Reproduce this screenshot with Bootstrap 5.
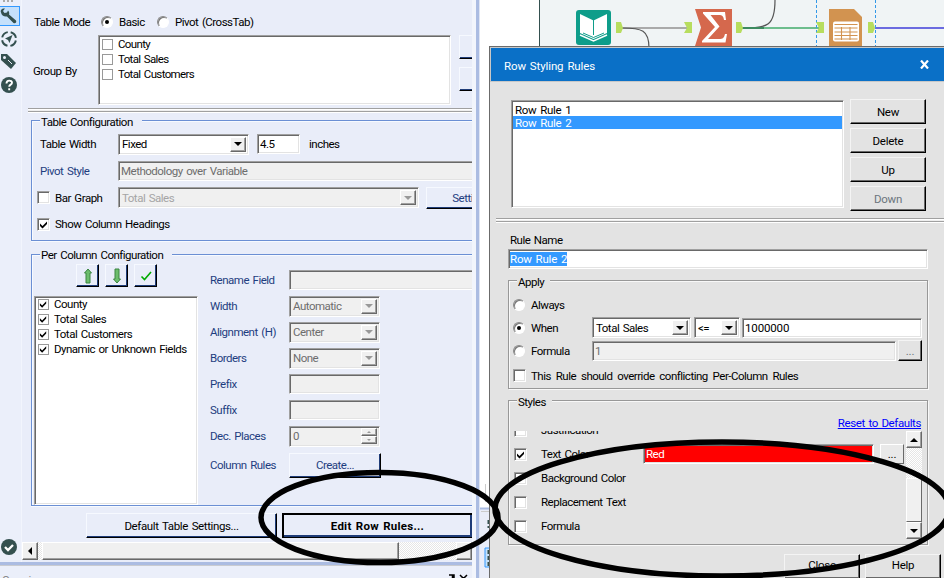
<!DOCTYPE html>
<html lang="en">
<head>
<meta charset="utf-8">
<title>Row Styling Rules</title>
<link href="https://cdn.jsdelivr.net/npm/bootstrap@5.3.0/dist/css/bootstrap.min.css" rel="stylesheet">
<style>
body{margin:0;overflow:hidden;background:#fff}
.desk{width:944px;height:578px;font:11.5px/14px Roboto,"Liberation Sans",sans-serif;letter-spacing:-.5px;word-spacing:1.2px;color:#000;white-space:nowrap}
.desk svg{display:block;flex:none}
.side{width:22px;background:#ebeffa;border-right:1px solid #f2f5fd;height:562px}
.tool{width:20px;height:20px}
.tool-on{border:1px solid #3399ff;background:#c5e0fb;border-left:0}
.pane{width:450px;background:#e9edf9;height:562px;overflow:hidden}
.split{width:8px;flex:none;height:578px;background:linear-gradient(90deg,#f2f5fc 0 4px,#abbce2 4px 7px,#dfe5f3 7px)}
.sunk{background:#fff;border:1px solid;border-color:#a0a0a0 #fff #fff #a0a0a0;box-shadow:inset 1px 1px #696969,inset -1px -1px #e3e3e3;flex:none}
.gray{background:#f0f0f0;color:#6d6d6d}
.push{border:1px solid;border-color:#f6f9ff #000 #000 #f6f9ff;box-shadow:inset -1px -1px #1f3c78;height:25px;flex:none;display:flex;align-items:center;justify-content:center}
.dlg .push{border-color:#f4f4f4 #000 #000 #f4f4f4;box-shadow:inset -1px -1px #696969;height:25px;width:76px;letter-spacing:-.25px}
.dis{color:#1e3d80}
.rule{height:5px;border-top:1px solid #a0a0a0;border-bottom:1px solid #fff;background:linear-gradient(#fff 0 1px,#eee 1px 2px,#a0a0a0 2px)}
.grp{border:1px solid #6b8fd4;border-right:0;box-shadow:inset 1px 1px #f7faff,0 1px #f7faff;margin-left:9px}
.grp-title{display:block;width:max-content;background:#e9edf9;padding:2px 9px 0 1px;margin:-8px 0 0 8px;height:15px}
.dlg .grp{border:1px solid #989898;box-shadow:inset 1px 1px #f8f8f8,1px 1px #f8f8f8;margin:0}
.dlg .grp-title{background:#e3e3e3;padding-right:6px}
.drop{display:flex;align-items:center;justify-content:space-between;height:21px;padding:2px 2px 2px 3px}
.arr{width:16px;height:100%;background:#f0f0f0;border:1px solid;border-color:#fff #696969 #696969 #fff;box-shadow:inset -1px -1px #a0a0a0;display:flex;align-items:center;justify-content:center;flex:none}
.arr::after{content:"";border:4px solid transparent;border-top-color:#000;border-bottom:0}
.gray .arr::after{border-top-color:#999}
.arr.up::after{border:4px solid transparent;border-bottom-color:#000;border-top:0}
.arr.lf::after{border:4px solid transparent;border-right-color:#000;border-left:0}
.arr.rt::after{border:0}
.chk{width:13px;height:13px}
.flat{width:11px;height:11px;border:1px solid #999;background:#fff;flex:none}
.rad{width:12px;height:12px;border-radius:50%;border:1px solid;border-color:#888 #fff #fff #888;background:#fff;box-shadow:inset 1px 1px #777;flex:none;display:flex;align-items:center;justify-content:center}
.rad.on::after{content:"";width:4px;height:4px;border-radius:50%;background:#000}
.fld{height:20px;padding:2px 2px}
.track{background:repeating-conic-gradient(#fff 0 25%,#e6e6e6 0 50%) 0 0/2px 2px}
.canvas{width:464px;height:578px;background:#fff}
.dlg{left:489px;top:46px;width:460px;height:540px;background:#e3e3e3;border:1px solid #6b6b6b;border-right:0}
.bar{height:35px;background:#0a70c7;border:1px solid #c8c8c8;border-right:0;color:#fff}
.it{height:15px;line-height:15px}
.sel{background:#3399ff;color:#fff}
/* table mode and grouping */
.t1{height:27px;padding:17px 0 0 12px}
.lab2{width:67px}.r1{margin-right:6px}.r2{width:38px}.r3{margin-right:6px}
.grpby{height:70px;margin:8px 0 0 11px}
.gl{width:65px;flex:none;padding-top:2px}
.list1{width:353px;height:70px;padding:1px 3px 0}
.list1 .it{letter-spacing:-.65px}
.gbtn{margin-left:8px;width:30px}.gbtn .push{height:24px;width:30px;margin-bottom:8px}
.rl1{margin:3px 0 0 6px}
/* table configuration */
.g1{margin-top:7px;height:121px}
.g1rows{padding:3px 0 0 8px}
.c1{height:26.7px}
.lab{width:78px;flex:none}
.wfix{width:131px}.inch{width:43px;margin-left:8px}.inl{margin-left:9px}
.pv{width:400px}.cb{margin-left:-3px}.lab.cb{width:81px}.cbt{margin-left:5px}
.wbar{width:301px}.faint{color:#a5a5a5}.setb{width:98px;height:22px;margin-left:7px}
/* per column configuration */
.g2{margin-top:13px;height:252px}
.g2 .grp-title{padding-top:1px}
.lcol{width:176px;padding-left:2px;flex:none}.tri{gap:6px;padding-left:42px;margin-top:2px}.tri .push{width:23px;height:23px}
.list2{width:164px;height:209px;margin-top:9px;padding:0 3px}.ck{margin-left:5px}
.rcol{padding-left:2px;padding-top:5px}.rcol .lab{width:79px}
.colrow{height:26px}
.w91{width:91px}.crow{height:32px}.w92{width:92px}
.spin{width:16px;height:17px}.spin .arr{height:8px}.spin .arr::after{border-width:2px}
.spin .arr.up::after{border-width:2px;border-top:0;border-bottom-color:#999}
.botb{margin:7px 0 0 64px;gap:5px}.defb{width:191px}.editb{width:191px;border:1px solid #000;box-shadow:inset 1px 1px #000,inset -2px -2px #1f3c78;font-weight:700;letter-spacing:.25px}
.defb{letter-spacing:-.38px}
.hsb{height:18px;margin-top:4px}.thumb{width:357px;margin-left:4px;background:#f0f0f0;border:1px solid;border-color:#fff #696969 #696969 #fff;box-shadow:inset -1px -1px #a0a0a0}
.below{height:16px;width:472px;border-top:3px solid #abbce2;background:#ebeffa;box-shadow:inset 0 1px #c9cbd0;color:#888;padding:8px 2px 0 2px;overflow:hidden}
/* dialog */
.ttl{margin:3px 0 0 13px;letter-spacing:-.12px}.xx{margin-right:20px}
.dtop{padding:18px 0 0 21px}.dlist{width:333px;height:108px;padding:2px 1px}.ri{height:13px;line-height:15px;padding-left:2px;letter-spacing:-.28px}
.dbt{gap:4px;margin:-1px 0 0 6px}
.rl2{margin:7px 4px 0 6px}
.rn{margin:10px 0 0 20px}.rni{margin:2px 0 0 18px;width:420px;padding:2px 1px;letter-spacing:-.2px}
.dlg .ga{margin:11px 0 0 18px;width:420px;height:109px}
.ar{height:23px;padding-left:4px}.ga .ar:nth-child(2){margin-top:5px}
.al{margin-left:6px;width:61px;flex:none}
.d1{width:99px}.d2{width:46px;margin-left:3px}.d3{width:180px;margin-left:2px;letter-spacing:-.15px}
.d4{width:304px}.dlg .dots{width:24px;height:21px;margin-left:2px}
.last{height:27px}.wide{margin-left:5px;word-spacing:2.5px}
.dlg .gs{margin:11px 0 0 18px;width:420px;height:145px}
.reset{padding:8px 6px 0;height:23px;letter-spacing:-.4px}.reset a{color:#00f}
.clip{height:113px;overflow:hidden}
.sl{padding-left:5px;margin-top:-13px}.stx{margin-left:14px;width:102px;flex:none}
.srow{height:24px;flex:none}.red{width:231px;background:#f00;color:#fff}.dlg .dots2{width:24px;height:20px;margin-left:6px;border-color:#fff #696969 #696969 #fff;background:#e9e9e9;box-shadow:none}
.vsb{width:16px;margin-right:5px;height:108px;flex:none}.vsb .arr{height:17px}.vth{height:44px;margin-top:auto;background:#f0f0f0;border:1px solid;border-color:#fff #696969 #696969 #fff}
.dft{margin:9px 0 0 294px;gap:5px}.dlg .dft .push{padding-bottom:3px}
</style>
</head>
<body>
<svg width="0" height="0" class="position-absolute"><defs>
<path id="tick" d="M2 4.500L4.500 7 9 2.500V5L4.500 9.500 2 7z" fill="#000"/></defs></svg>
<div class="desk position-relative overflow-hidden">
<div class="d-flex">
 <div class="flex-shrink-0">
 <div class="d-flex">
  <div class="side d-flex flex-column">
   <svg width="21" height="6"><path d="M3 1h2M7 1h2M11 1h2" stroke="#aaa" stroke-width="2"/></svg>
   <div class="tool tool-on"><svg width="19" height="18" viewBox="0 0 19 18"><path d="M1 5.500C0 3 2 1 5 1.500L3 4l1.500 2L7 5.500 8 3.500c2 2 1 4 1 4l7 6c1 2-1 3.500-2.500 2.500L7 9.500C4 10 1.500 8.500 1 5.500z" fill="#34504f"/></svg></div>
   <svg class="mt-1" width="18" height="18" viewBox="0 0 18 18"><circle cx="9" cy="9" r="7" fill="none" stroke="#34504f" stroke-width="2" stroke-dasharray="8 3" stroke-dashoffset="-1.500"/><path d="M12.500 5L9.500 13 8 10 5 8.500z" fill="#34504f"/></svg>
   <svg class="mt-1" width="18" height="18" viewBox="0 0 18 18"><path d="M1 4V2h6l9 9-5 6-10-9z" fill="#34504f"/><circle cx="4.500" cy="5.500" r="1.500" fill="#ebeffa"/><path d="M8 8l4 4" stroke="#ebeffa"/></svg>
   <svg class="mt-1" width="18" height="20" viewBox="0 0 18 20"><circle cx="9" cy="11" r="8" fill="#34504f"/><path d="M6.500 9.500c0-4 5.500-3.500 5.500-.8 0 2-2.800 1.800-2.800 4M9.200 14.200v2" fill="none" stroke="#fff" stroke-width="1.900"/></svg>
   <svg class="mt-auto mb-1" width="18" height="22" viewBox="0 0 18 22"><circle cx="9" cy="11" r="8" fill="#34504f"/><path d="M5 11l3 3 5-5" fill="none" stroke="#fff" stroke-width="2.300"/></svg>
  </div>
  <div class="pane">
   <div class="t1 d-flex align-items-center"><span class="lab2">Table Mode</span><span class="rad on r1"></span><span class="r2">Basic</span><span class="rad r3"></span><span>Pivot (CrossTab)</span></div>
   <div class="d-flex grpby"><span class="gl align-self-center">Group By</span>
    <div class="sunk list1">
     <div class="it d-flex align-items-center"><span class="flat"></span><span class="ck">County</span></div>
     <div class="it d-flex align-items-center"><span class="flat"></span><span class="ck">Total Sales</span></div>
     <div class="it d-flex align-items-center"><span class="flat"></span><span class="ck">Total Customers</span></div>
    </div>
    <div class="gbtn"><div class="push"></div><div class="push"></div></div>
   </div>
   <div class="rule rl1"></div>
   <div class="grp g1">
    <span class="grp-title">Table Configuration</span>
    <div class="g1rows">
     <div class="d-flex align-items-center c1"><span class="lab">Table Width</span><div class="sunk drop wfix"><span>Fixed</span><i class="arr"></i></div><div class="sunk fld inch">4.5</div><span class="inl">inches</span></div>
     <div class="d-flex align-items-center c1"><span class="lab dis">Pivot Style</span><div class="sunk gray fld pv">Methodology over Variable</div></div>
     <div class="d-flex align-items-center c1"><span class="lab d-flex align-items-center cb"><span class="sunk chk"></span><span class="cbt">Bar Graph</span></span><div class="sunk gray drop wbar"><span class="faint">Total Sales</span><i class="arr"></i></div><div class="push dis setb">Settings...</div></div>
     <div class="d-flex align-items-center c1"><span class="d-flex align-items-center cb"><span class="sunk chk"><svg width="11" height="11"><use href="#tick"/></svg></span><span class="cbt">Show Column Headings</span></span></div>
    </div>
   </div>
   <div class="grp g2">
    <span class="grp-title">Per Column Configuration</span>
    <div class="d-flex">
     <div class="lcol">
      <div class="d-flex tri">
       <div class="push"><svg width="12" height="18"><path d="M6 2l3.500 4H8v10H4V6H2.500z" fill="#6cbd6c" stroke="#3a8540"/></svg></div>
       <div class="push"><svg width="12" height="18"><path d="M6 16l3.500-4H8V2H4v10H2.500z" fill="#6cbd6c" stroke="#3a8540"/></svg></div>
       <div class="push"><svg width="12" height="14"><path d="M1.500 7.500l3 3L11 3" fill="none" stroke="#0a0" stroke-width="1.600"/></svg></div>
      </div>
      <div class="sunk list2">
       <div class="it d-flex align-items-center"><span class="flat"><svg width="9" height="9" viewBox="1 1 10 10"><use href="#tick"/></svg></span><span class="ck">County</span></div>
       <div class="it d-flex align-items-center"><span class="flat"><svg width="9" height="9" viewBox="1 1 10 10"><use href="#tick"/></svg></span><span class="ck">Total Sales</span></div>
       <div class="it d-flex align-items-center"><span class="flat"><svg width="9" height="9" viewBox="1 1 10 10"><use href="#tick"/></svg></span><span class="ck">Total Customers</span></div>
       <div class="it d-flex align-items-center"><span class="flat"><svg width="9" height="9" viewBox="1 1 10 10"><use href="#tick"/></svg></span><span class="ck">Dynamic or Unknown Fields</span></div>
      </div>
     </div>
     <div class="rcol dis">
      <div class="colrow d-flex align-items-center"><span class="lab">Rename Field</span><div class="sunk gray fld pv"></div></div>
      <div class="colrow d-flex align-items-center"><span class="lab">Width</span><div class="sunk gray drop w91"><span>Automatic</span><i class="arr"></i></div></div>
      <div class="colrow d-flex align-items-center"><span class="lab">Alignment (H)</span><div class="sunk gray drop w91"><span>Center</span><i class="arr"></i></div></div>
      <div class="colrow d-flex align-items-center"><span class="lab">Borders</span><div class="sunk gray drop w91"><span>None</span><i class="arr"></i></div></div>
      <div class="colrow d-flex align-items-center"><span class="lab">Prefix</span><div class="sunk gray fld w91"></div></div>
      <div class="colrow d-flex align-items-center"><span class="lab">Suffix</span><div class="sunk gray fld w91"></div></div>
      <div class="colrow d-flex align-items-center"><span class="lab">Dec. Places</span><div class="sunk gray drop w91"><span>0</span><span class="spin"><i class="arr up"></i><i class="arr"></i></span></div></div>
      <div class="colrow crow d-flex align-items-center"><span class="lab">Column Rules</span><div class="push w92">Create...</div></div>
     </div>
    </div>
   </div>
   <div class="d-flex botb"><div class="push defb">Default Table Settings...</div><div class="push editb">Edit Row Rules...</div></div>
   <div class="d-flex hsb track"><i class="arr lf"></i><div class="thumb"></div><i class="arr rt ms-auto"></i></div>
  </div>
 </div>
 <div class="below d-flex justify-content-between"><span>Overview</span><svg width="24" height="10"><path d="M3 2h5v5M6.500 2v5M14 2l7 7M21 2l-7 7" fill="none" stroke="#000" stroke-width="1.500"/></svg></div>
 </div>
 <div class="split"></div>
 <div class="canvas">
  <svg width="464" height="578" viewBox="480 0 464 578">
   <path d="M539 0h405v50H539z" fill="#f0f4f5"/><path d="M539.500 0v48" stroke="#34504f"/>
   <path d="M622 28h70" stroke="#aaa" stroke-width="2"/><path d="M622 28c20 0 27 2 27 20M742 28c26 0 33-2 33-28" fill="none" stroke="#555" stroke-width="1.200"/>
   <path d="M742 28h78" stroke="#6dbd8d" stroke-width="2"/><path d="M742 28h22" stroke="#3d8a5f" stroke-width="2"/><path d="M875 28h69" stroke="#6b6be0" stroke-width="2"/>
   <path d="M816.500 0v48M875.500 0v48" stroke="#3399e8" stroke-dasharray="3 2"/>
   <g fill="#b7dd5e"><path d="M616 22h5l2 6-2 5h-5zM736 22h5l2 6-2 5h-5zM868 22h5l2 6-2 5h-5zM684 22h8v11h-8l3-5zM816 22h8v11h-8l3-5z"/></g>
   <rect x="576" y="10" width="35" height="35" rx="3" fill="#0e9d8a"/><path d="M580 14l13.500 6.500L607 14v19l-13.500 6L580 33z" fill="#fff"/><path d="M593.500 20v15" stroke="#0e9d8a" stroke-width="1"/><path d="M583 33l10.500 4.500L604 33" fill="none" stroke="#0e9d8a" stroke-width="1"/><path d="M580 35l13.500 6L607 35" fill="none" stroke="#fff" stroke-width="1.500"/>
   <path d="M695 9h37v37h-37l6-18.500z" fill="#d5684d"/><path d="M703 12h22l1 8h-2c-.5-4-2-5-5-5h-8.500l9 11.500L708 39h11c4 0 5-1 6-5h2l-1.500 8.500H702V41l13-14-12-13.500z" fill="#fff"/>
   <path d="M829 9h25l8 8v29h-33z" fill="#d29350"/><rect x="833" y="21.500" width="26" height="20" rx="2" fill="#fff"/><path d="M834.500 24.500h23M834.500 28h23M834.500 32h23M834.500 35.500h23M834.500 39h23M841.500 27v13M850 27v13" stroke="#d29350" stroke-width="1.100"/>
   <path d="M480 508h10v70h-10z" fill="#e9edf9"/><path d="M480 508.500h10" stroke="#abbce2" stroke-width="2"/><path d="M485.500 484v18M481 511.500h9M481 536.500h9" stroke="#ccc"/><path d="M485 548h6v19h-6z" fill="#c5e0fb" stroke="#39f"/><path d="M488.500 550v17M488.500 520v8" stroke="#34504f" stroke-width="2" stroke-dasharray="4 2"/>
  </svg>
 </div>
</div>
<div class="dlg position-absolute">
 <div class="bar d-flex align-items-center"><span class="ttl">Row Styling Rules</span><svg class="ms-auto xx" width="9" height="9"><path d="M1 .5l7 8M8 .5l-7 8" stroke="#fff" stroke-width="2.200"/></svg></div>
 <div class="d-flex dtop"><div class="sunk dlist"><div class="ri">Row Rule 1</div><div class="ri sel">Row Rule 2</div></div>
  <div class="d-flex flex-column dbt"><div class="push">New</div><div class="push">Delete</div><div class="push">Up</div><div class="push text-secondary">Down</div></div></div>
 <div class="rule rl2"></div>
 <div class="rn">Rule Name</div>
 <div class="sunk fld rni"><span class="sel">Row Rule 2</span></div>
 <div class="grp ga"><span class="grp-title">Apply</span>
  <div class="ar d-flex align-items-center"><span class="rad"></span><span class="al">Always</span></div>
  <div class="ar d-flex align-items-center"><span class="rad on"></span><span class="al">When</span><div class="sunk drop d1"><span>Total Sales</span><i class="arr"></i></div><div class="sunk drop d2"><span>&lt;=</span><i class="arr"></i></div><div class="sunk fld d3">1000000</div></div>
  <div class="ar d-flex align-items-center"><span class="rad"></span><span class="al">Formula</span><div class="sunk gray fld d4">1</div><div class="push dots text-secondary">...</div></div>
  <div class="ar d-flex align-items-center last"><span class="sunk chk"></span><span class="wide">This Rule should override conflicting Per-Column Rules</span></div>
 </div>
 <div class="grp gs"><span class="grp-title">Styles</span>
  <div class="text-end reset"><a href="#">Reset to Defaults</a></div>
  <div class="d-flex clip">
   <div class="flex-grow-1 sl">
    <div class="srow d-flex align-items-center"><span class="sunk chk"></span><span class="stx">Justification</span></div>
    <div class="srow d-flex align-items-center"><span class="sunk chk"><svg width="11" height="11"><use href="#tick"/></svg></span><span class="stx">Text Color</span><div class="sunk fld red">Red</div><div class="push dots2">...</div></div>
    <div class="srow d-flex align-items-center"><span class="sunk chk"></span><span class="stx">Background Color</span></div>
    <div class="srow d-flex align-items-center"><span class="sunk chk"></span><span class="stx">Replacement Text</span></div>
    <div class="srow d-flex align-items-center"><span class="sunk chk"></span><span class="stx">Formula</span></div>
   </div>
   <div class="vsb track d-flex flex-column"><i class="arr up"></i><div class="vth"></div><i class="arr"></i></div>
  </div>
 </div>
 <div class="d-flex dft"><div class="push">Close</div><div class="push">Help</div></div>
</div>
<svg class="position-absolute top-0 start-0" width="944" height="578" fill="none" stroke="#000" stroke-width="5.500"><ellipse cx="379.500" cy="517.500" rx="118.500" ry="45"/><ellipse cx="722" cy="509" rx="227" ry="67"/></svg>
</div>
<script src="https://cdn.jsdelivr.net/npm/bootstrap@5.3.0/dist/js/bootstrap.bundle.min.js"></script>
</body>
</html>
